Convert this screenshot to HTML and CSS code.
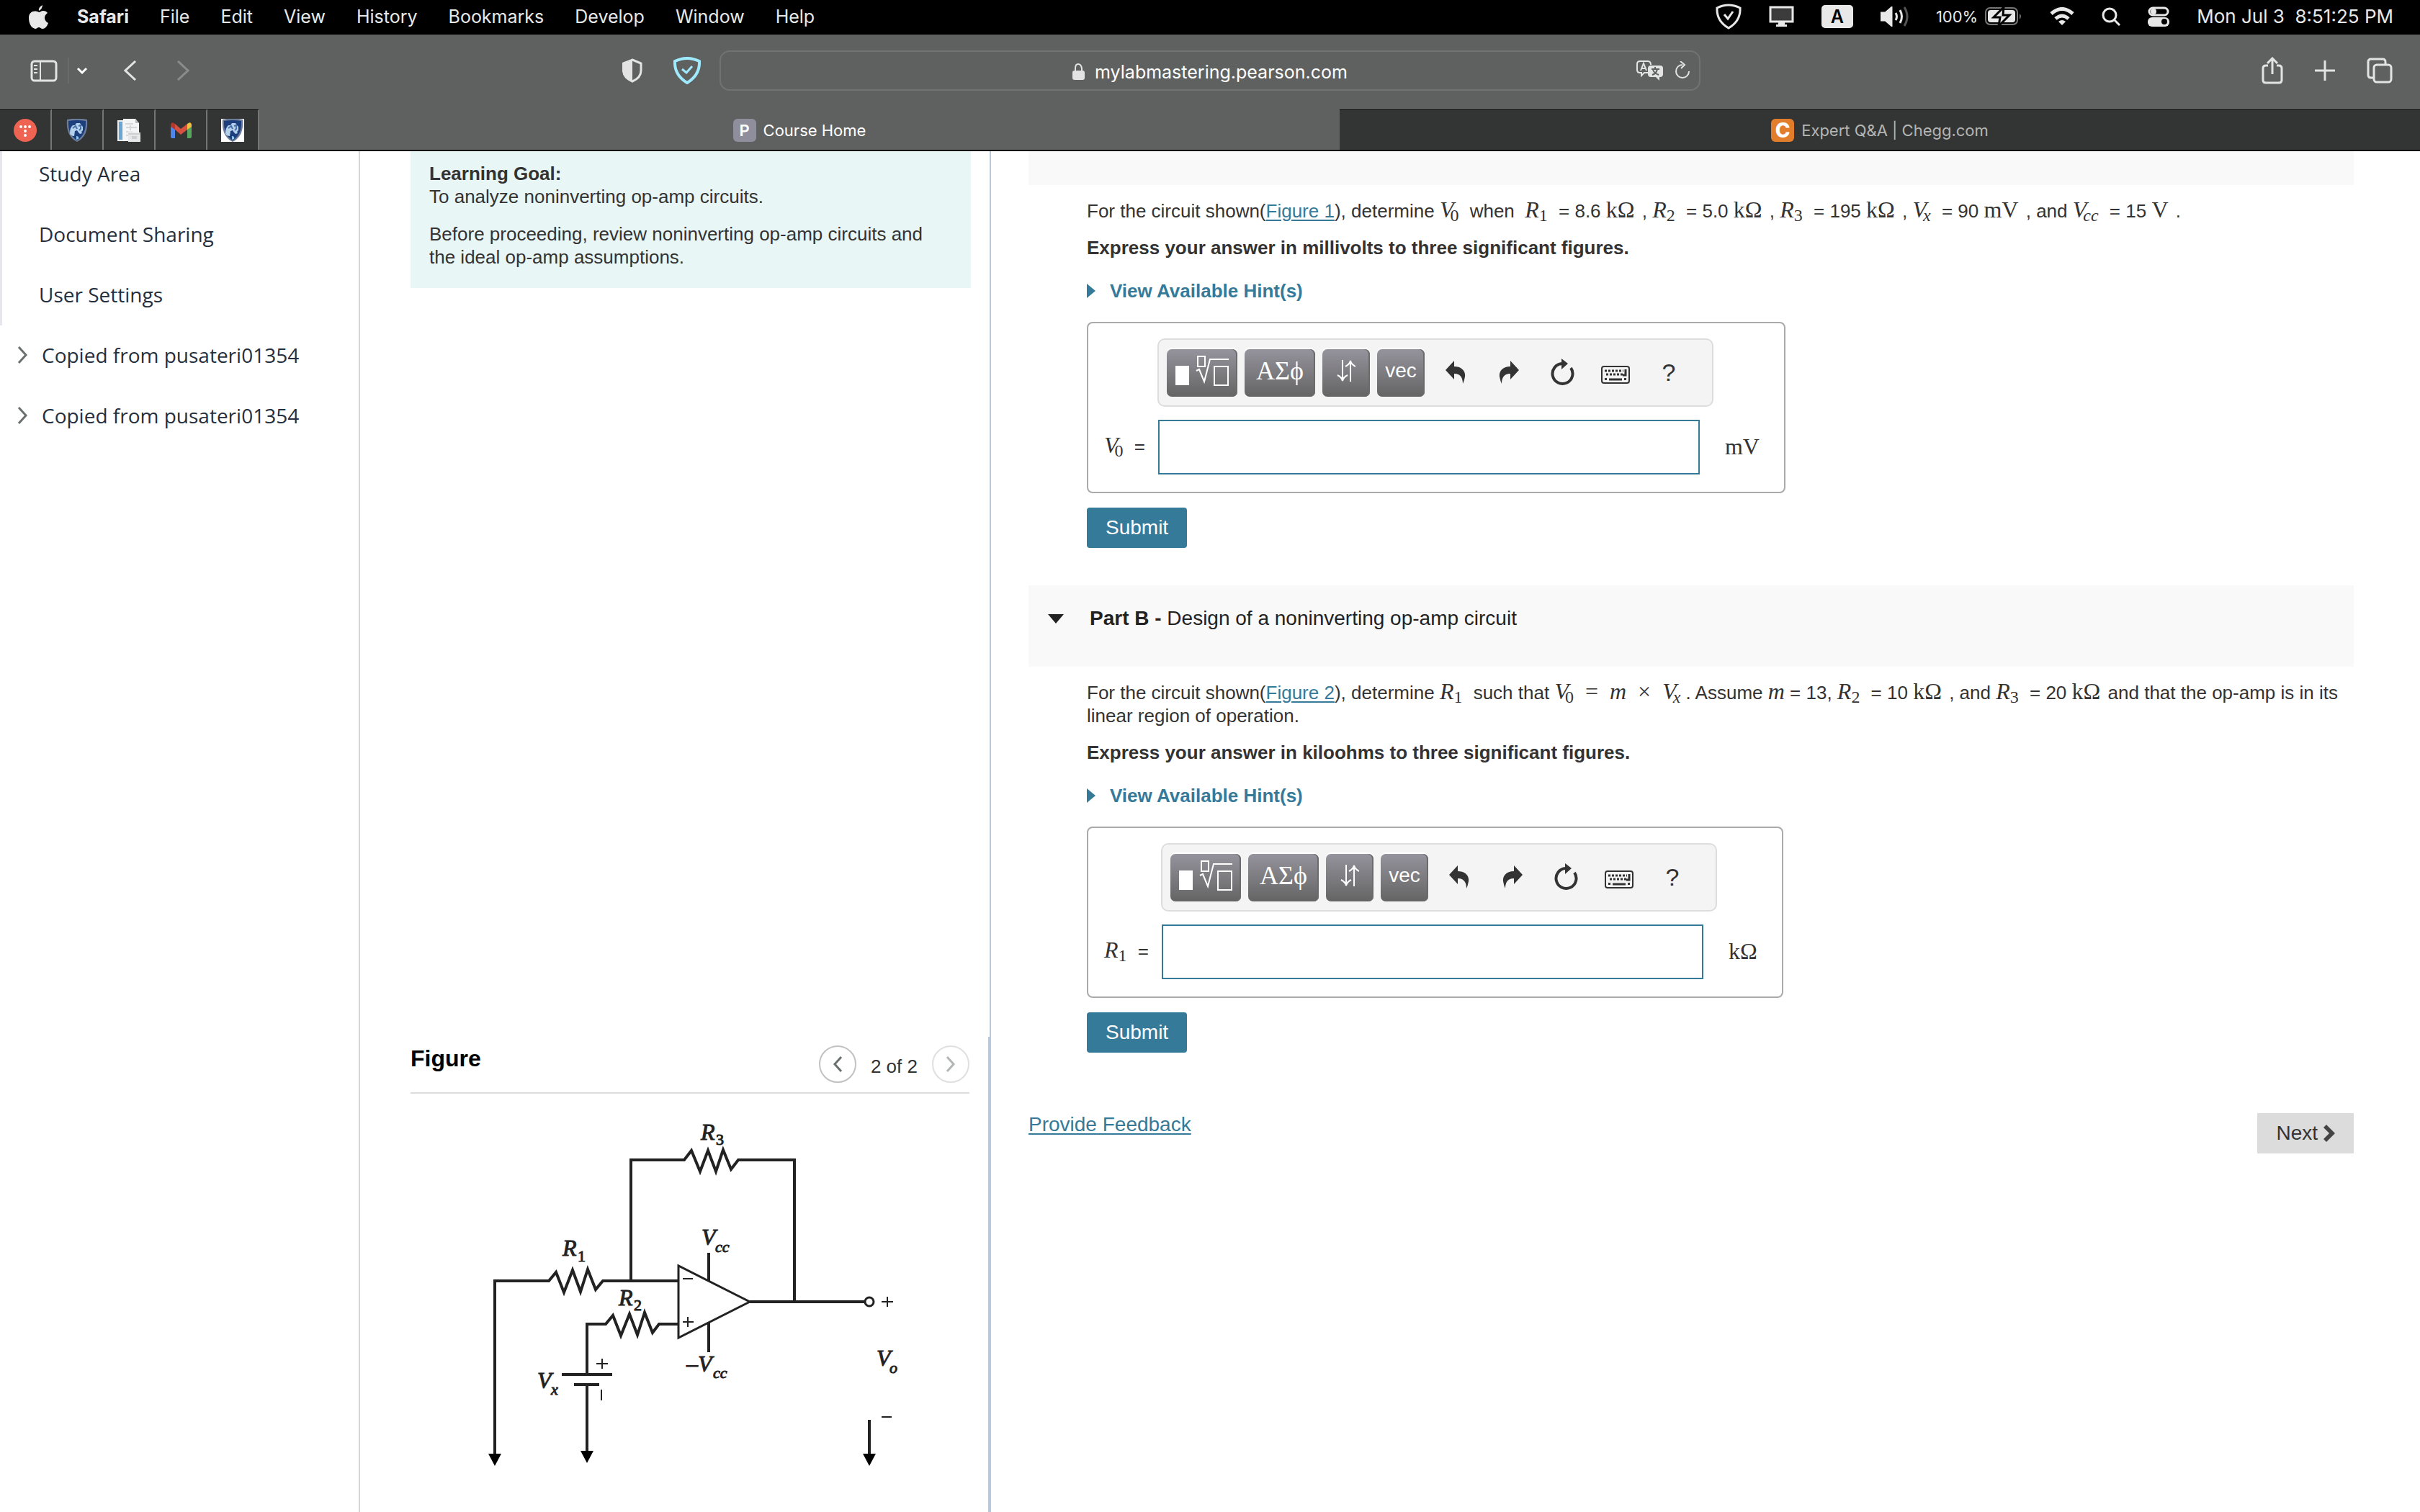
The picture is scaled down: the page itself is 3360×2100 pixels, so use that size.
FILE: index.html
```html
<!DOCTYPE html>
<html lang="en">
<head>
  <meta charset="UTF-8" />
  <meta name="viewport" content="width=device-width, initial-scale=1.0"/>
  <title>Course Home</title>
  <link rel="stylesheet" href="styles.css">
</head>
<body>

  <!-- shared icons -->
  <svg class="sprite" aria-hidden="true">
    <symbol id="undo" viewBox="0 0 28 32"><path d="M0 13 12 0V8C23 8 28 15 27 22Q26 28 24 32C24 24 21 18 12 18V26Z"/></symbol>
    <symbol id="redo" viewBox="0 0 28 32"><path d="M28 13 16 0V8C5 8 0 15 1 22Q2 28 4 32C4 24 7 18 16 18V26Z"/></symbol>
    <symbol id="reset" viewBox="0 0 34 38"><path d="M17 7A14 14 0 1 0 29 13" fill="none" stroke="#333" stroke-width="4"/><path d="M16 0 25 7 16 15Z"/></symbol>
    <symbol id="keyboard" viewBox="0 0 40 26"><rect x="1" y="1" width="38" height="23" rx="3" fill="none" stroke="#333" stroke-width="2"/><path d="M5 7H31M7 12H31" fill="none" stroke="#333" stroke-width="3" stroke-dasharray="3 2"/><path d="M11 19H29M34 5V13H30" fill="none" stroke="#333" stroke-width="3"/><path d="M5 17H8V20H5ZM32 17H35V20H32Z"/></symbol>
    <symbol id="root" viewBox="0 0 74 42"><path d="M0 14H19V41H0Z" fill="#fff"/><path d="M31 1H41V15H31ZM54 15H73V41H54Z" fill="none" stroke="#fff" stroke-width="2"/><path d="M29 21 33 19 40 36 48 5H74" fill="none" stroke="#fff" stroke-width="2"/></symbol>
    <symbol id="updown" viewBox="0 0 26 30"><path d="M8 0V28M1 21Q7 24 8 29 9 24 15 21M19 30V2M12 9Q18 6 19 1 20 6 26 9" fill="none" stroke="#fff" stroke-width="2"/></symbol>
    <symbol id="lion" viewBox="0 0 32 32"><path d="M2 1Q16-2 30 1Q32 24 16 32Q0 24 2 1Z" fill="#6d7c99"/><path d="M4 3Q16 1 28 3Q29 22 16 30Q3 22 4 3Z" fill="#1e3f7d"/><path d="M6 21Q6 12 10 9L13 9 15 6 20 6 22 9 24 11V16L22 18 23 20 20 21 18 19 16 16 13 17 12 24Q8 24 6 21Z" fill="#b5d0ea"/><path d="M15 24Q19 24 18 28L15 29Z" fill="#8fc6ee"/><path d="M10 13 14 10 16 14M18 10 21 9V14L19 16" fill="none" stroke="#4a72ad" stroke-width="2"/></symbol>
  </svg>

  <nav class="menubar">
    <svg class="apple" width="27" height="33" viewBox="0 0 27 33"><path d="M19 0Q19 5 14 8Q13 3 19 0ZM14 10C16 10 17 8 20 8Q24 8 26 11C20 15 21 22 27 25Q24 33 19 33C17 33 16 31 14 31S11 33 9 33C3 32 0 25 0 18C0 8 9 7 14 10Z" fill="#e8e8e8"/></svg>
    <b>Safari</b>
    <span>File</span>
    <span>Edit</span>
    <span>View</span>
    <span>History</span>
    <span>Bookmarks</span>
    <span>Develop</span>
    <span>Window</span>
    <span>Help</span>
    <div class="status">
      <svg width="36" height="36" viewBox="0 0 36 36" fill="none" stroke="#e8e8e8" stroke-width="3"><path d="M2 6Q18-2 34 6Q35 24 18 34Q1 24 2 6Z"/><path d="M12 15 17 21 24 11"/></svg>
      <svg width="35" height="30" viewBox="0 0 35 30"><path d="M2 2H33V22H2Z" fill="#3c3c3c" stroke="#e8e8e8" stroke-width="3"/><path d="M13 23H22V26H25V29H10V26H13Z" fill="#e8e8e8"/></svg>
      <span class="input-source">A</span>
      <svg width="39" height="28" viewBox="0 0 39 28" fill="none" stroke="#e8e8e8" stroke-width="3"><path d="M1 9H7L15 2V26L7 19H1Z" fill="#e8e8e8"/><path d="M21 9Q24 14 21 19M27 5Q32 14 27 23"/><path d="M33 1Q41 14 33 27" stroke="#555"/></svg>
      <span class="battery">100%
        <svg width="52" height="26" viewBox="0 0 52 26"><rect x="1" y="1" width="44" height="23" rx="6" fill="none" stroke="#777" stroke-width="2"/><rect x="4" y="4" width="38" height="17" rx="4" fill="#e8e8e8"/><path d="M48 9Q52 12 48 17Z" fill="#777"/><path d="M26 0 12 14H21L19 26 34 11H25Z" fill="#e8e8e8" stroke="#000" stroke-width="3"/></svg>
      </span>
      <svg width="34" height="26" viewBox="0 0 34 26" fill="none" stroke="#e8e8e8" stroke-width="5"><path d="M2 9Q17-4 32 9M8 16Q17 8 26 16"/><path d="M17 25 12 20Q17 16 22 20Z" fill="#e8e8e8" stroke="none"/></svg>
      <svg width="26" height="26" viewBox="0 0 26 26" fill="none" stroke="#e8e8e8" stroke-width="3"><circle cx="11" cy="11" r="9"/><path d="M17 17 25 25"/></svg>
      <svg width="30" height="28" viewBox="0 0 30 28"><rect x="2" y="2" width="26" height="10" rx="5" fill="none" stroke="#e8e8e8" stroke-width="3"/><circle cx="8" cy="7" r="4" fill="#e8e8e8"/><rect y="15" width="30" height="13" rx="6" fill="#e8e8e8"/><circle cx="23" cy="21" r="4" fill="#000"/></svg>
      <span class="clock">Mon Jul 3&nbsp; 8:51:25 PM</span>
    </div>
  </nav>

  <header class="toolbar">
    <div class="tools-left">
      <svg width="38" height="31" viewBox="0 0 38 31" fill="none" stroke="#e2e3e2" stroke-width="3"><rect x="2" y="2" width="34" height="27" rx="4"/><path d="M14 2V29M5 8H10M5 13H10M5 18H10" stroke-width="2"/></svg>
      <svg class="menu-arrow" width="28" height="36" viewBox="0 0 28 36" fill="none" stroke="#fff" stroke-width="3"><path d="M1 0V36" stroke="#747675" stroke-width="1"/><path d="M14 15 20 21 26 15"/></svg>
      <svg class="back" width="18" height="28" viewBox="0 0 18 28" fill="none" stroke="#e2e3e2" stroke-width="3"><path d="M16 1 2 14 16 27"/></svg>
      <svg class="forward" width="18" height="28" viewBox="0 0 18 28" fill="none" stroke="#8a8c8b" stroke-width="3"><path d="M2 1 16 14 2 27"/></svg>
      <svg class="privacy" width="30" height="34" viewBox="0 0 30 34"><path d="M15 2 27 7V17Q27 27 15 32Q3 27 3 17V7Z" fill="none" stroke="#e2e3e2" stroke-width="3"/><path d="M15 1 1 6V18Q2 28 15 33Z" fill="#e2e3e2"/></svg>
      <svg width="38" height="38" viewBox="0 0 38 38" fill="none" stroke="#9feaff" stroke-width="4"><path d="M2 6Q19-2 36 6Q37 25 19 36Q1 25 2 6Z"/><path d="M12 17 18 22 26 13" stroke-width="3"/></svg>
    </div>
    <div class="address">
      <div class="site">
        <svg width="17" height="24" viewBox="0 0 17 24"><path d="M4 11V7Q4 1 8 1T13 7V11" fill="none" stroke="#e2e3e2" stroke-width="2"/><rect y="10" width="17" height="13" rx="3" fill="#e2e3e2"/></svg>
        <span>mylabmastering.pearson.com</span>
      </div>
      <div class="address-tools">
        <svg width="38" height="28" viewBox="0 0 38 28"><path d="M17 17H11L7 21V17H5Q1 17 1 13V5Q1 1 5 1H16Q20 1 20 6" fill="none" stroke="#e2e3e2" stroke-width="2"/><path d="M6 14 10 4 14 14M7 11H13" fill="none" stroke="#e2e3e2" stroke-width="2"/><path d="M20 7H33Q37 7 37 11V19Q37 23 33 23H32V28L27 23H20Q16 23 16 19V11Q16 7 20 7Z" fill="#e2e3e2"/><path d="M21 12H32M26 9V12M22 20Q28 18 29 12M23 13Q25 18 31 20" fill="none" stroke="#5f6160" stroke-width="2"/></svg>
        <svg width="23" height="26" viewBox="0 0 23 26" fill="none" stroke="#e2e3e2" stroke-width="2"><path d="M12 5A9 9 0 1 0 21 14M9 0 15 5 10 10"/></svg>
      </div>
    </div>
    <div class="tools-right">
      <svg width="30" height="38" viewBox="0 0 30 38" fill="none" stroke="#e2e3e2" stroke-width="3"><path d="M9 12H6Q2 12 2 16V32Q2 36 6 36H24Q28 36 28 32V16Q28 12 24 12H21M15 24V3M8 9 15 2 22 9"/></svg>
      <svg width="28" height="28" viewBox="0 0 28 28" stroke="#e2e3e2" stroke-width="3"><path d="M14 0V28M0 14H28"/></svg>
      <svg width="36" height="36" viewBox="0 0 36 36" fill="none" stroke="#e2e3e2" stroke-width="3"><path d="M9 28H6Q2 28 2 24V6Q2 2 6 2H22Q26 2 26 6V9"/><rect x="10" y="10" width="24" height="24" rx="4"/></svg>
    </div>
  </header>

  <div class="tabs">
    <div class="pin"><svg width="32" height="32" viewBox="0 0 32 32"><circle cx="16" cy="16" r="16" fill="#ee6352"/><g fill="#fff"><circle cx="10" cy="11" r="2"/><circle cx="16" cy="11" r="2"/><circle cx="22" cy="11" r="2"/><circle cx="16" cy="17" r="2"/><circle cx="16" cy="23" r="2"/></g></svg></div>
    <div class="pin"><svg width="32" height="32"><use href="#lion"/></svg></div>
    <div class="pin"><svg width="32" height="32" viewBox="0 0 32 32"><path d="M0 2H8V31H0Z" fill="#e8edf1"/><path d="M2 4H7V29H2Z" fill="#6ba5d0"/><path d="M8 0H25L30 6V31H8Z" fill="#f4f5f6"/><path d="M25 0V6H30Z" fill="#bbb"/><path d="M11 7H22M12 12H27M12 18H16M12 23H16M18 9V16" stroke="#d5d8da" stroke-width="2"/><path d="M15 17H21L22 19H32V32H15Z" fill="#e6e8ea"/><path d="M15 21H32" stroke="#b5b8ba"/><path d="M20 24H27V28H20Z" fill="#ccd0d3"/></svg></div>
    <div class="pin"><svg width="29" height="22" viewBox="0 0 29 22"><path d="M0 5 6 9V22H2Q0 22 0 20Z" fill="#4f86ec"/><path d="M29 5 23 9V22H27Q29 22 29 20Z" fill="#58a55c"/><path d="M6 2 14 9 23 2V10L14 17 6 10Z" fill="#d95040"/><path d="M0 3Q1-2 6 2V10L0 6Z" fill="#b5362b"/><path d="M29 3Q28-2 23 2V10L29 6Z" fill="#f2bf42"/></svg></div>
    <div class="pin"><svg class="white" width="32" height="32"><use href="#lion"/></svg></div>
    <div class="tab active"><span class="favicon">P</span>Course Home</div>
    <div class="tab"><span class="favicon chegg">C</span>Expert Q&amp;A | Chegg.com</div>
  </div>

  <div class="page">
    <aside class="sidebar">
      <div class="sub-links">
        <a href="#">Study Area</a>
        <a href="#">Document Sharing</a>
        <a href="#">User Settings</a>
      </div>
      <a class="course" href="#"><svg width="14" height="24" viewBox="0 0 14 24"><path d="M2 1 12 12 2 23"/></svg>Copied from pusateri01354</a>
      <a class="course" href="#"><svg width="14" height="24" viewBox="0 0 14 24"><path d="M2 1 12 12 2 23"/></svg>Copied from pusateri01354</a>
    </aside>

    <section class="reference">
      <div class="goal">
        <p><b>Learning Goal:</b><br>To analyze noninverting op-amp circuits.</p>
        <p>Before proceeding, review noninverting op-amp circuits and the ideal op-amp assumptions.</p>
      </div>

      <div class="figure-pane">
        <div class="figure-head">
          <h2>Figure</h2>
          <div class="pager">
            <button aria-label="Previous figure"><svg width="14" height="22" viewBox="0 0 14 22"><path d="M12 1 3 11 12 21"/></svg></button>
            <span>2 of 2</span>
            <button aria-label="Next figure" disabled><svg width="14" height="22" viewBox="0 0 14 22"><path d="M2 1 11 11 2 21"/></svg></button>
          </div>
        </div>
        <svg class="circuit" viewBox="570 1519 776 581">
          <g fill="none" stroke="#222" stroke-width="4">
            <path d="M687 2020V1779H762L772 1767 783 1795 795 1764 806 1794 816 1763 827 1791 837 1779H942"/>
            <path d="M876 1779V1611H950L960 1598 972 1627 983 1598 994 1627 1004 1597 1015 1624 1025 1611H1103V1808"/>
            <path d="M815 1909V1839H841L851 1827 862 1855 874 1825 885 1854 895 1823 906 1851 915 1839H942"/>
            <path d="M942 1758V1858L1041 1808Z" stroke-width="3"/>
            <path d="M1041 1808H1201M984 1740V1779M984 1837V1878"/>
            <path d="M780 1909H850M797 1923H832M815 1923V2018M1207 1972V2022"/>
            <path d="M835 1930V1945M828 1894H844M836 1887V1901M948 1776H962M948 1836H963M955 1829V1843M1224 1808H1240M1232 1801V1815M1224 1968H1238" stroke-width="2"/>
            <circle cx="1207" cy="1808" r="6" stroke-width="3"/>
          </g>
          <path d="M678 2019H696L687 2036ZM806 2015H824L815 2032ZM1198 2019H1216L1207 2036Z"/>
          <g class="labels">
            <text x="973" y="1583">R</text><text class="num" x="994" y="1590">3</text>
            <text x="781" y="1744">R</text><text class="num" x="802" y="1752">1</text>
            <text x="859" y="1813">R</text><text class="num" x="880" y="1820">2</text>
            <text x="974" y="1729">V</text><text class="small" x="993" y="1739">cc</text>
            <text x="953" y="1905">–V</text><text class="small" x="990" y="1914">cc</text>
            <text x="746" y="1928">V</text><text class="small" x="765" y="1937">x</text>
            <text x="1217" y="1897">V</text><text class="small" x="1235" y="1907">o</text>
          </g>
        </svg>
      </div>
    </section>

    <main class="work">
      <div class="part-strip"></div>
      <div class="part">
        <p>For the circuit shown(<a href="#">Figure 1</a>), determine <i class="var">V<sub class="tuck">0</sub></i> when&nbsp; <i class="var">R<sub>1</sub></i> = 8.6 <span class="unit">kΩ</span> , <i class="var">R<sub>2</sub></i> = 5.0 <span class="unit">kΩ</span> , <i class="var">R<sub>3</sub></i> = 195 <span class="unit">kΩ</span> , <i class="var">V<sub class="tuck letter">x</sub></i> = 90 <span class="unit">mV</span> , and <i class="var">V<sub class="tuck letter">cc</sub></i> = 15 <span class="unit">V</span> .</p>
        <p><b>Express your answer in millivolts to three significant figures.</b></p>
        <button class="hints">View Available Hint(s)</button>
        <div class="answer">
          <div class="math-tools">
            <button class="key wide" aria-label="Templates"><svg width="74" height="42"><use href="#root"/></svg></button>
            <button class="key wide greek">ΑΣϕ</button>
            <button class="key" aria-label="Arrows"><svg width="26" height="30"><use href="#updown"/></svg></button>
            <button class="key">vec</button>
            <div class="icon-keys">
              <button aria-label="Undo"><svg width="28" height="32"><use href="#undo"/></svg></button>
              <button aria-label="Redo"><svg width="28" height="32"><use href="#redo"/></svg></button>
              <button aria-label="Reset"><svg width="34" height="38"><use href="#reset"/></svg></button>
              <button class="low" aria-label="Keyboard"><svg width="40" height="26"><use href="#keyboard"/></svg></button>
              <button aria-label="Help">?</button>
            </div>
          </div>
          <label for="v0"><i class="var">V<sub class="tuck">0</sub></i> =</label>
          <input id="v0" type="text">
          <span class="unit">mV</span>
        </div>
        <button class="submit">Submit</button>
      </div>

      <button class="part-head"><span class="caret"></span><span><b>Part B -</b> Design of a noninverting op-amp circuit</span></button>
      <div class="part">
        <p>For the circuit shown(<a href="#">Figure 2</a>), determine <i class="var">R<sub>1</sub></i> such that <span class="equation"><i>V</i><sub class="tuck">0</sub> <span class="op">=</span> <i>m</i> <span class="op">×</span> <i>V</i><sub class="tuck letter">x</sub></span> . Assume <i class="equation">m</i> = 13, <i class="var">R<sub>2</sub></i> = 10 <span class="unit">kΩ</span> , and <i class="var">R<sub>3</sub></i> = 20 <span class="unit">kΩ</span> and that the op-amp is in its linear region of operation.</p>
        <p><b>Express your answer in kiloohms to three significant figures.</b></p>
        <button class="hints">View Available Hint(s)</button>
        <div class="answer">
          <div class="math-tools">
            <button class="key wide" aria-label="Templates"><svg width="74" height="42"><use href="#root"/></svg></button>
            <button class="key wide greek">ΑΣϕ</button>
            <button class="key" aria-label="Arrows"><svg width="26" height="30"><use href="#updown"/></svg></button>
            <button class="key">vec</button>
            <div class="icon-keys">
              <button aria-label="Undo"><svg width="28" height="32"><use href="#undo"/></svg></button>
              <button aria-label="Redo"><svg width="28" height="32"><use href="#redo"/></svg></button>
              <button aria-label="Reset"><svg width="34" height="38"><use href="#reset"/></svg></button>
              <button class="low" aria-label="Keyboard"><svg width="40" height="26"><use href="#keyboard"/></svg></button>
              <button aria-label="Help">?</button>
            </div>
          </div>
          <label for="r1"><i class="var">R<sub>1</sub></i> =</label>
          <input id="r1" type="text">
          <span class="unit">kΩ</span>
        </div>
        <button class="submit">Submit</button>
      </div>

      <div class="work-foot">
        <a href="#">Provide Feedback</a>
        <button class="next">Next <svg width="16" height="24" viewBox="0 0 16 24"><path d="M4 0 16 12 4 24 0 20 8 12 0 4Z"/></svg></button>
      </div>
    </main>
  </div>

</body>
</html>
```
FILE: styles.css
```css
* {
  margin: 0;
  padding: 0;
  box-sizing: border-box;
}

body {
  font-family: 'Liberation Sans', Arial, sans-serif;
  font-size: 26px;
  line-height: 32px;
  color: #333;
  background: #fff;
  min-height: 100vh;
  display: flex;
  flex-direction: column;
}

button {
  font: inherit;
  color: inherit;
  border: none;
  background: none;
  cursor: pointer;
}

svg {
  display: block;
  flex: none;
}

.sprite {
  display: none;
}

/* menu bar */
.menubar {
  height: 48px;
  padding: 0 37px 2px 40px;
  display: flex;
  align-items: center;
  gap: 43px;
  background: #000;
  color: #e8e8e8;
  font-family: Inter, sans-serif;
  font-size: 25px;
  white-space: nowrap;
}

.apple {
  margin-right: -3px;
}

.status {
  margin-left: auto;
  display: flex;
  align-items: center;
  gap: 38px;
}

.input-source {
  width: 44px;
  height: 32px;
  border-radius: 5px;
  background: #e8e8e8;
  color: #000;
  font-weight: 600;
  text-align: center;
}

.battery {
  display: flex;
  align-items: center;
  gap: 10px;
  font-size: 22px;
}

.clock {
  font-size: 26px;
}

/* browser toolbar */
.toolbar {
  height: 104px;
  display: grid;
  grid-template-columns: 1fr minmax(0, 1362px) 1fr;
  align-items: center;
  padding-bottom: 4px;
  background: #5f6160;
  color: #fff;
  font-family: Inter, sans-serif;
}

.tools-left {
  display: flex;
  align-items: center;
  padding: 0 26px 0 42px;
}

.menu-arrow {
  margin-left: 14px;
}

.back {
  margin-left: 50px;
}

.forward {
  margin-left: 55px;
}

.privacy {
  margin-left: auto;
  margin-right: 42px;
}

.address {
  height: 56px;
  padding: 0 12px;
  border: 2px solid #717372;
  border-radius: 14px;
  display: grid;
  grid-template-columns: 1fr auto 1fr;
  align-items: center;
  font-size: 25px;
}

.site {
  grid-column: 2;
  padding-top: 3px;
}

.site,
.address-tools {
  display: flex;
  align-items: center;
  justify-content: flex-end;
  gap: 14px;
}

.tools-right {
  display: flex;
  align-items: center;
  justify-content: flex-end;
  gap: 44px;
  padding-right: 38px;
}

/* tab strip */
.tabs {
  height: 58px;
  display: flex;
  background: #333534;
  border-bottom: 2px solid #111;
  font-family: Inter, sans-serif;
  font-size: 22px;
  color: #b5b5b4;
}

.pin,
.tab {
  display: flex;
  align-items: center;
  justify-content: center;
  border-top: 1px solid #000;
  border-right: 2px solid #747675;
}

.pin {
  width: 72px;
}

.white {
  background: #fff;
}

.tab {
  flex: 1;
  gap: 10px;
  border-right: none;
}

.tab.active {
  background: #5f6160;
  border-top-color: #5f6160;
  color: #fff;
}

.favicon {
  width: 32px;
  border-radius: 6px;
  background: #8e8e9c;
  color: #fff;
  font-weight: 600;
  text-align: center;
}

.chegg {
  background: #e27d2c;
  font-size: 28px;
  font-weight: 800;
}

/* page */
.page {
  flex: 1;
  display: grid;
  grid-template-columns: 500px 876px 1fr;
}

.sidebar {
  border-right: 2px solid #d6d6d6;
  font-family: 'Open Sans', sans-serif;
  font-size: 28px;
}

.sidebar a {
  display: flex;
  align-items: center;
  height: 84px;
  padding-bottom: 2px;
  color: #252f3d;
  text-decoration: none;
}

.sub-links {
  border-left: 3px solid #e6e6ec;
  padding-left: 51px;
}

.sub-links a:first-child {
  height: 74px;
  padding-bottom: 12px;
}

.sidebar .course {
  padding-left: 24px;
  gap: 20px;
}

.course path {
  fill: none;
  stroke: #6a7070;
  stroke-width: 3;
}

.reference {
  display: flex;
  flex-direction: column;
  justify-content: space-between;
  border-right: 2px solid #b9c9da;
}

.goal {
  margin: 0 26px 0 70px;
  padding: 15px 26px 27px;
  background: #e8f6f6;
}

.goal p + p {
  margin-top: 20px;
}

.figure-pane {
  padding: 12px 26px 0 70px;
  border-right: 2px solid #b9c9da;
}

.figure-head {
  display: flex;
  justify-content: space-between;
  padding-bottom: 13px;
  border-bottom: 2px solid #ddd;
}

.figure-head h2 {
  padding-top: 2px;
  font-size: 32px;
  color: #000;
}

.pager {
  display: flex;
  align-items: center;
  gap: 20px;
}

.pager span {
  padding-top: 6px;
}

.pager button {
  width: 52px;
  height: 52px;
  border: 2px solid #c2c2c2;
  border-radius: 50%;
  display: flex;
  align-items: center;
  justify-content: center;
}

.pager path {
  fill: none;
  stroke: #6a7070;
  stroke-width: 3;
}

.pager button:disabled {
  opacity: 0.5;
}

.circuit {
  width: 100%;
}

.labels {
  font-family: 'Liberation Serif', serif;
  font-size: 32px;
  font-style: italic;
  fill: #222;
  stroke: #222;
}

.labels .num {
  font-size: 22px;
  font-style: normal;
}

.labels .small {
  font-size: 22px;
}

/* problem parts */
.work {
  padding: 0 92px 0 52px;
}

.work a {
  color: #367a9a;
  text-underline-offset: 3px;
}

.part-strip {
  height: 47px;
  background: #f9f9f9;
}

.part {
  padding: 20px 0 52px 81px;
}

.part p {
  margin-bottom: 19px;
}

.var,
.unit,
.equation {
  font-family: 'Liberation Serif', serif;
  font-size: 32px;
  line-height: 0;
}

.var {
  margin-right: 8px;
}

.unit {
  margin-right: 3px;
}

.op {
  margin: 0 8px;
}

sub {
  font-size: 24px;
  font-style: normal;
  vertical-align: -5px;
  line-height: 0;
}

.tuck {
  margin-left: -5px;
}

.letter {
  font-style: italic;
}

.hints {
  display: flex;
  align-items: center;
  gap: 20px;
  margin: 28px 0 27px;
  color: #367a9a;
  font-weight: bold;
}

.hints::before {
  content: '';
  border-left: 12px solid #367a9a;
  border-top: 10px solid transparent;
  border-bottom: 10px solid transparent;
}

.answer {
  width: max-content;
  display: grid;
  grid-template-columns: auto 772px auto;
  align-items: center;
  row-gap: 18px;
  padding: 21px 34px 24px 22px;
  border: 2px solid #aaa;
  border-radius: 8px;
}

.answer label {
  grid-column: 1;
  padding-right: 17px;
}

.answer input {
  width: 752px;
  height: 76px;
  margin-left: 1px;
  padding: 0 12px;
  border: 2px solid #367a9a;
  font-size: 28px;
}

.answer > .unit {
  margin: 0 0 0 16px;
}

.answer label,
.answer > .unit {
  padding-bottom: 3px;
}

.math-tools {
  grid-column: 2;
  height: 95px;
  padding: 0 11px;
  display: flex;
  align-items: center;
  gap: 10px;
  border: 2px solid #ddd;
  border-radius: 10px;
  background: #f4f4f4;
}

.key {
  width: 66px;
  height: 66px;
  padding-bottom: 5px;
  display: flex;
  align-items: center;
  justify-content: center;
  border-radius: 7px;
  background: linear-gradient(#95939c, #646464);
  box-shadow: 0 -2px 0 #fff, inset -2px 0 0 #6b6b6b;
  color: #fff;
  font-size: 28px;
}

.wide {
  width: 98px;
}

.greek {
  font-family: 'Liberation Serif', serif;
  font-size: 36px;
}

.icon-keys {
  display: flex;
  margin-left: -4px;
}

.icon-keys button {
  width: 74px;
  height: 66px;
  padding-bottom: 2px;
  display: flex;
  align-items: center;
  justify-content: center;
  font-size: 34px;
}

.icon-keys .low {
  padding-top: 8px;
}

.icon-keys svg {
  fill: #333;
}

.submit {
  display: block;
  height: 56px;
  margin-top: 20px;
  padding: 0 26px;
  border-radius: 4px;
  background: #367a9a;
  color: #fff;
  font-size: 28px;
}

.part-head {
  width: 100%;
  height: 113px;
  padding: 30px 27px;
  display: flex;
  gap: 36px;
  background: #f9f9f9;
  color: #222;
  font-size: 28px;
  text-align: left;
}

.caret {
  margin-top: 10px;
  height: 0;
  border-top: 13px solid #222;
  border-left: 11px solid transparent;
  border-right: 11px solid transparent;
}

.work-foot {
  display: flex;
  justify-content: space-between;
  align-items: flex-start;
  padding-top: 32px;
  font-size: 28px;
}

.next {
  height: 56px;
  padding: 0 26px;
  display: flex;
  align-items: center;
  gap: 8px;
  background: #dcdcdc;
}

.next svg {
  fill: #444;
}
```
